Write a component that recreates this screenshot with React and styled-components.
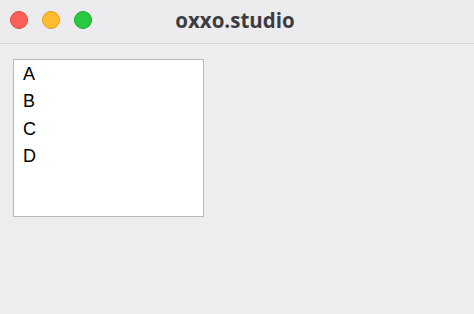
import React from "react";
import styled, { createGlobalStyle } from "styled-components";

const GlobalStyle = createGlobalStyle`
	html, body {
		margin: 0;
		padding: 0;
		background: #edecee;
		font-family: "Liberation Sans", Arial, sans-serif;
	}
`;

const Window = styled.div`
	width: 474px;
	height: 314px;
	background: #edecee;
	display: flex;
	flex-direction: column;
	overflow: hidden;
`;

const TitleBar = styled.div`
	height: 44px;
	border-bottom: 1px solid #d3d2d4;
	background: #ecebed;
	display: flex;
	align-items: center;
	position: relative;
	padding-left: 10px;
	padding-bottom: 3px;
	box-sizing: border-box;
	gap: 14px;
`;

const Light = styled.span`
	width: 18px;
	height: 18px;
	border-radius: 50%;
	background: ${(props) => props.color};
	border: 0.5px solid ${(props) => props.edge};
	box-sizing: border-box;
`;

const Title = styled.div`
	position: absolute;
	left: 0;
	right: 0;
	top: 0;
	bottom: 0;
	display: flex;
	align-items: center;
	justify-content: center;
	padding-right: 4px;
	padding-bottom: 4px;
	font-family: "Open Sans", "Liberation Sans", sans-serif;
	font-weight: 700;
	font-size: 20.5px;
	color: #3d3c3f;
	pointer-events: none;
`;

const Content = styled.div`
	padding: 15px 13px;
`;

const ListBox = styled.div`
	width: 191px;
	height: 158px;
	box-sizing: border-box;
	background: #fff;
	border: 1px solid #b9b8ba;
	padding: 1px 9px 0;
	display: flex;
	flex-direction: column;
`;

const Item = styled.div`
	height: 27.3px;
	display: flex;
	align-items: center;
	font-size: 18px;
	color: #000;
`;

export default function App() {
	const items = ["A", "B", "C", "D"];
	return (
		<>
			<GlobalStyle />
			<Window>
				<TitleBar>
					<Light color="#fe5f57" edge="#e2463f" />
					<Light color="#febc2e" edge="#e1a116" />
					<Light color="#28c840" edge="#14ae2a" />
					<Title>oxxo.studio</Title>
				</TitleBar>
				<Content>
					<ListBox>
						{items.map((it) => (
							<Item key={it}>{it}</Item>
						))}
					</ListBox>
				</Content>
			</Window>
		</>
	);
}
